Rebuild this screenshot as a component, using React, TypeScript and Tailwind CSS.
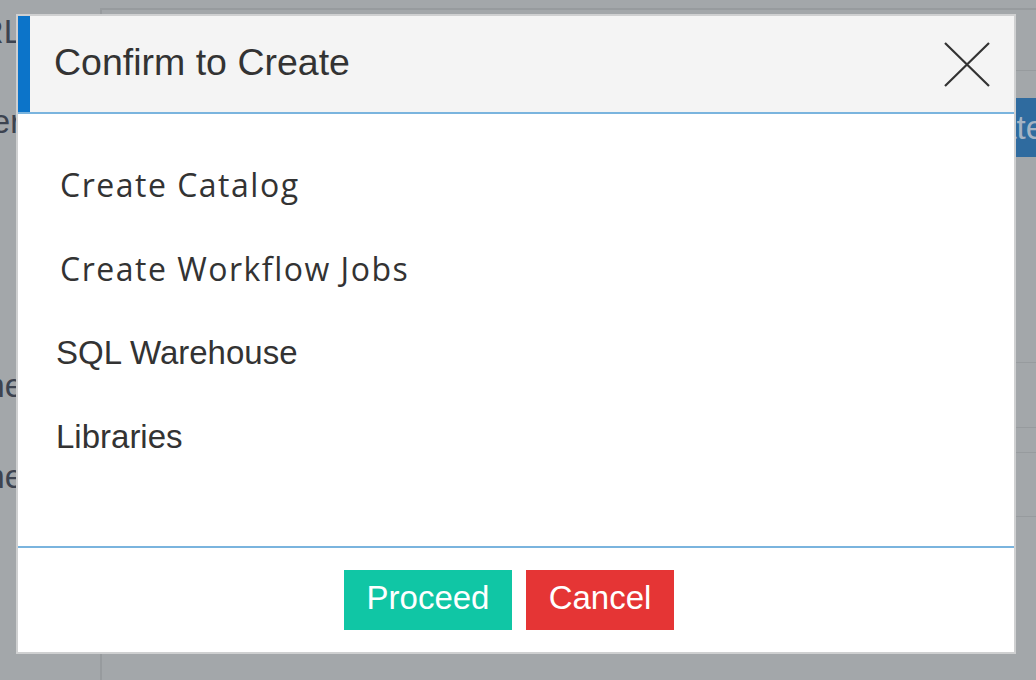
import React from 'react'

const steps = [
  { label: 'Create Catalog', kind: 'task' },
  { label: 'Create Workflow Jobs', kind: 'task' },
  { label: 'SQL Warehouse', kind: 'resource' },
  { label: 'Libraries', kind: 'resource' },
]

function CloseIcon() {
  return (
    <svg width="46" height="45" viewBox="0 0 46 45" fill="none">
      <path d="M1 1 L45 44 M45 1 L1 44" stroke="#333" strokeWidth="2.2" />
    </svg>
  )
}

export default function App() {
  return (
    <div className="relative h-[680px] w-[1036px] overflow-hidden bg-[#a3a7aa] font-['Liberation_Sans',Arial,sans-serif]">
      {/* dimmed page behind the dialog */}
      <div className="flex h-full">
        <div className="w-[100px] shrink-0 whitespace-nowrap text-[33px] leading-[33px] text-[#3c4350]">
          <div className="mt-[15px] -ml-[44px]">URL</div>
          <div className="mt-[57px] -ml-[76px]">Server</div>
          <div className="mt-[231px] -ml-[65px]">Name</div>
          <div className="mt-[58px] -ml-[65px]">Name</div>
        </div>
        <div className="mt-[8px] min-w-0 flex-1 border-t-2 border-l-2 border-[#979b9e]">
          <div className="h-[61px] border-b border-[#979b9e]" />
          <div className="mt-[27px] ml-[820px] h-[59px] w-[145px] shrink-0 whitespace-nowrap bg-[#2f6b9f] px-[23px] text-[33px] leading-[59px] text-[#a6b4c4]">
            Create
          </div>
          <div className="h-[206px] border-b border-[#979b9e]" />
          <div className="h-[65px] border-b border-[#979b9e]" />
          <div className="h-[25px] border-b border-[#979b9e]" />
          <div className="h-[64px] border-b border-[#979b9e]" />
        </div>
      </div>

      {/* dialog */}
      <div className="absolute left-[16px] top-[14px] flex h-[640px] w-[1000px] flex-col border-2 border-[#cfd0d1] bg-white">
        <div className="flex h-[98px] shrink-0 border-b-2 border-[#7ab4de] bg-[#f4f4f4]">
          <div className="w-[12px] shrink-0 bg-[#0c74c9]" />
          <div className="flex flex-1 items-center justify-between pl-[24px] pr-[24px]">
            <h2 className="mb-[4px] text-[37.5px] text-[#333]">Confirm to Create</h2>
            <button className="flex items-center justify-center">
              <CloseIcon />
            </button>
          </div>
        </div>

        <div className="flex h-[434px] shrink-0 flex-col border-b-2 border-[#7ab4de] pt-[29px] pl-[38px]">
          {steps.map((s) =>
            s.kind === 'task' ? (
              <div
                key={s.label}
                className="ml-[4px] h-[84px] font-['Open_Sans',sans-serif] text-[32px] leading-[84px] tracking-[1.5px] text-[#333]"
              >
                {s.label}
              </div>
            ) : (
              <div key={s.label} className="h-[84px] text-[33px] leading-[84px] text-[#333]">
                {s.label}
              </div>
            )
          )}
        </div>

        <div className="flex flex-1 items-center justify-center gap-[14px] pr-[14px]">
          <button className="flex h-[60px] w-[168px] items-center justify-center bg-[#10c6a5] pb-[4px] text-[33px] text-white">
            Proceed
          </button>
          <button className="flex h-[60px] w-[148px] items-center justify-center bg-[#e53535] pb-[4px] text-[33px] text-white">
            Cancel
          </button>
        </div>
      </div>
    </div>
  )
}
